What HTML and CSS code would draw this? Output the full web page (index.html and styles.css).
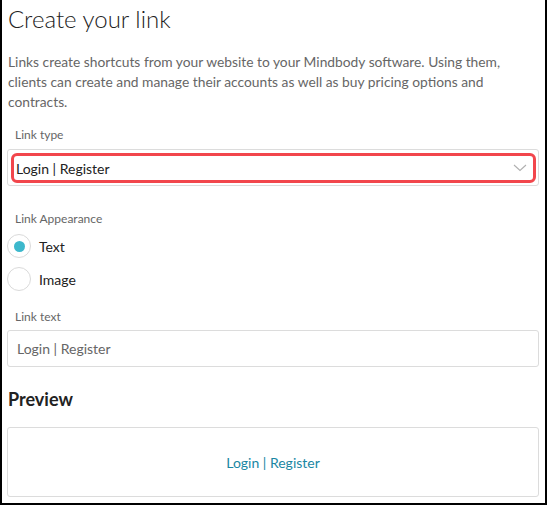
FILE: index.html
```html
<!DOCTYPE html>
<html lang="en">
<head>
    <meta charset="UTF-8">
    <meta name="viewport" content="width=device-width, initial-scale=1.0">
    <title>Create your link</title>
    <link rel="stylesheet" href="styles.css">
</head>
<body>
    <div class="page">
        <h1 class="title">Create your link</h1>
        <p class="intro">Links create shortcuts from your website to your Mindbody software. Using them, clients can create and manage their accounts as well as buy pricing options and contracts.</p>

        <div class="field">
            <label class="label">Link type</label>
            <div class="select-wrap">
                <div class="select">
                    <span>Login | Register</span>
                    <svg class="chevron" width="14" height="8" viewBox="0 0 14 8">
                        <path d="M1 1 L7 6.5 L13 1" fill="none" stroke="#b0b0b0" stroke-width="1.1"/>
                    </svg>
                </div>
            </div>
        </div>

        <div class="field appearance">
            <label class="label">Link Appearance</label>
            <div class="radios">
                <div class="radio">
                    <span class="dot checked"></span>
                    <span>Text</span>
                </div>
                <div class="radio">
                    <span class="dot"></span>
                    <span>Image</span>
                </div>
            </div>
        </div>

        <div class="field link-text">
            <label class="label">Link text</label>
            <div class="input">Login | Register</div>
        </div>

        <h2 class="preview-title">Preview</h2>
        <div class="preview">
            <a href="#" class="preview-link">Login | Register</a>
        </div>
    </div>
</body>
</html>
```

FILE: styles.css
```css
* {
    box-sizing: border-box;
}

body {
    margin: 0;
    background: #fff;
    font-family: Lato, "Open Sans", sans-serif;
}

.page {
    width: 547px;
    height: 505px;
    border-left: 2px solid #000;
    border-right: 2px solid #000;
    border-bottom: 2px solid #000;
    padding: 0 6px 0 5px;
    overflow: hidden;
}

.title {
    margin: 0;
    padding: 2px 0 0 1px;
    font-size: 24px;
    font-weight: 300;
    line-height: 34px;
    color: #222;
}

.intro {
    margin: 16px 0 0;
    padding-left: 1px;
    font-size: 13.8px;
    line-height: 20px;
    color: #666;
}

.field {
    margin-top: 15px;
}

.field.appearance {
    margin-top: 25px;
}

.field.link-text {
    margin-top: 18px;
}

.label {
    display: block;
    padding-left: 8px;
    font-size: 12px;
    line-height: 16px;
    color: #666;
}

.select-wrap {
    margin-top: 6px;
    border: 1px solid #dcdcdc;
    border-radius: 3px;
    padding: 3px 2px 2px 3px;
}

.select {
    display: flex;
    align-items: center;
    justify-content: space-between;
    height: 30px;
    padding: 0 6px 0 2px;
    border: 3px solid #f2464c;
    border-radius: 6px;
    font-size: 14px;
    color: #222;
}

.chevron {
    display: block;
}

.radios {
    display: flex;
    flex-direction: column;
    gap: 9px;
    margin-top: 7px;
}

.radio {
    display: flex;
    align-items: center;
    gap: 8px;
    font-size: 14px;
    color: #222;
}

.dot {
    width: 24px;
    height: 24px;
    border: 1px solid #dadada;
    border-radius: 50%;
    display: flex;
    align-items: center;
    justify-content: center;
}

.dot.checked::after {
    content: "";
    width: 11px;
    height: 11px;
    border-radius: 50%;
    background: #3db8cc;
}

.input {
    margin-top: 5px;
    height: 37px;
    border: 1px solid #dcdcdc;
    border-radius: 3px;
    padding: 0 9px;
    display: flex;
    align-items: center;
    font-size: 14px;
    color: #666;
}

.preview-title {
    margin: 21px 0 0;
    padding-left: 1px;
    font-size: 18px;
    font-weight: 700;
    line-height: 22px;
    color: #222;
}

.preview {
    margin-top: 17px;
    height: 70px;
    border: 1px solid #dcdcdc;
    border-radius: 3px;
    display: flex;
    align-items: center;
    justify-content: center;
}

.preview-link {
    font-size: 14px;
    color: #1a87a3;
    text-decoration: none;
}
```
